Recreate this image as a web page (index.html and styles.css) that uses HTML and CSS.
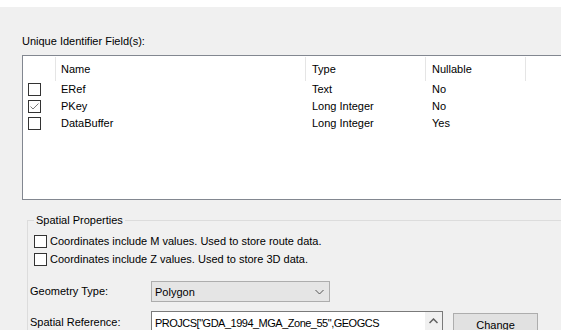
FILE: index.html
```html
<!DOCTYPE html>
<html lang="en">
<head>
    <meta charset="UTF-8">
    <title>Feature Class Properties</title>
    <link rel="stylesheet" href="styles.css">
</head>
<body>

<div class="top-strip"></div>

<div class="page">
    <div class="field-label">Unique Identifier Field(s):</div>

    <!-- Lista de campos -->
    <div class="listview">
        <div class="lv-row lv-header">
            <div class="lv-cell"></div>
            <div class="lv-cell">Name</div>
            <div class="lv-cell">Type</div>
            <div class="lv-cell">Nullable</div>
            <div class="lv-cell"></div>
        </div>
        <div class="lv-row">
            <div class="lv-cell"><span class="check"></span></div>
            <div class="lv-cell">ERef</div>
            <div class="lv-cell">Text</div>
            <div class="lv-cell">No</div>
        </div>
        <div class="lv-row">
            <div class="lv-cell">
                <span class="check">
                    <svg width="11" height="11" viewBox="0 0 11 11"><path d="M1.5 5.5 L4 8 L9.5 2.5" fill="none" stroke="#7a7a7a" stroke-width="1"/></svg>
                </span>
            </div>
            <div class="lv-cell">PKey</div>
            <div class="lv-cell">Long Integer</div>
            <div class="lv-cell">No</div>
        </div>
        <div class="lv-row">
            <div class="lv-cell"><span class="check"></span></div>
            <div class="lv-cell">DataBuffer</div>
            <div class="lv-cell">Long Integer</div>
            <div class="lv-cell">Yes</div>
        </div>
    </div>

    <!-- Propriedades espaciais -->
    <fieldset class="group">
        <legend>Spatial Properties</legend>

        <div class="opt"><span class="check"></span>Coordinates include M values. Used to store route data.</div>
        <div class="opt"><span class="check"></span>Coordinates include Z values. Used to store 3D data.</div>

        <div class="form-row geometry">
            <div class="form-label">Geometry Type:</div>
            <div class="combo">
                <span>Polygon</span>
                <svg width="9" height="6" viewBox="0 0 9 6"><path d="M0.5 1 L4.5 5 L8.5 1" fill="none" stroke="#555" stroke-width="1"/></svg>
            </div>
        </div>

        <div class="form-row spatial">
            <div class="form-label">Spatial Reference:</div>
            <div class="textbox">
                <div class="tb-text">PROJCS["GDA_1994_MGA_Zone_55",GEOGCS<br>"GCS_GDA_1994",DATUM["D_GDA_1994",</div>
                <div class="tb-scroll">
                    <svg width="9" height="6" viewBox="0 0 9 6"><path d="M0.5 5 L4.5 1 L8.5 5" fill="none" stroke="#606060" stroke-width="1.5"/></svg>
                </div>
            </div>
            <button class="btn">Change</button>
        </div>
    </fieldset>
</div>

</body>
</html>
```

FILE: styles.css
```css
html, body {
    margin: 0;
    padding: 0;
    height: 330px;
    overflow: hidden;
}
body {
    font-family: "Liberation Sans", Arial, sans-serif;
    font-size: 11px;
    color: #000;
    background-color: #f0f0f0;
}
.top-strip {
    height: 7px;
    background-color: #ffffff;
}
.page {
    padding-left: 22px;
}
.field-label {
    margin-top: 27px;
    line-height: 15px;
    height: 15px;
}
/* Lista */
.listview {
    margin-top: 6px;
    width: 600px;
    height: 143px;
    background-color: #ffffff;
    border: 1px solid #828790;
}
.lv-row {
    display: grid;
    grid-template-columns: 33px 250px 120px 100px 100px;
    height: 17px;
    line-height: 17px;
}
.lv-row .lv-cell {
    padding-left: 5px;
    white-space: nowrap;
}
.lv-row .lv-cell:first-child {
    padding-left: 5px;
    display: flex;
    align-items: center;
}
.lv-header {
    height: 25px;
    line-height: 24px;
}
.lv-header .lv-cell {
    margin-top: 1px;
    height: 24px;
    border-right: 1px solid #e5e5e5;
}
.lv-row .lv-cell:nth-child(3),
.lv-row .lv-cell:nth-child(4) {
    padding-left: 6px;
}
.check {
    display: inline-flex;
    align-items: center;
    justify-content: center;
    width: 11px;
    height: 11px;
    border: 1px solid #333333;
    background-color: #ffffff;
    flex: none;
}
/* Grupo */
.group {
    margin: 13px 0 0 5px;
    padding: 0 0 0 2px;
    width: 600px;
    border: 1px solid #dcdcdc;
    border-right: none;
    border-bottom: none;
    min-width: 0;
}
.group legend {
    padding: 0 2px;
    margin-left: 4px;
    line-height: 15px;
}
.opt {
    display: flex;
    align-items: center;
    height: 18px;
    margin-left: 4px;
    white-space: nowrap;
}
.opt .check {
    margin-right: 3px;
}
.opt:first-of-type {
    margin-top: 4px;
}
.form-row {
    display: flex;
    align-items: flex-start;
}
.form-label {
    width: 121px;
    flex: none;
}
.geometry {
    margin-top: 13px;
}
.geometry .form-label {
    line-height: 21px;
}
.combo {
    border: 1px solid #adadad;
    background-color: #e5e5e5;
    display: flex;
    align-items: center;
    justify-content: space-between;
    padding: 0 5px 0 3px;
    box-sizing: border-box;
    width: 179px;
    height: 21px;
}
.spatial {
    margin-top: 9px;
}
.spatial .form-label {
    padding-top: 3px;
    line-height: 16px;
}
.textbox {
    width: 292px;
    height: 40px;
    box-sizing: border-box;
    border: 1px solid #7a7a7a;
    background-color: #ffffff;
    display: flex;
}
.tb-text {
    flex: 1;
    padding: 3px 0 0 3px;
    line-height: 17px;
    letter-spacing: -0.5px;
    white-space: nowrap;
    overflow: hidden;
}
.tb-scroll {
    width: 17px;
    background-color: #f0f0f0;
    display: flex;
    justify-content: center;
    padding-top: 6px;
    box-sizing: border-box;
}
.btn {
    margin: 2px 0 0 10px;
    width: 85px;
    height: 17px;
    box-sizing: border-box;
    border: 1px solid #adadad;
    border-bottom: none;
    background-color: #e1e1e1;
    font-family: inherit;
    font-size: 11px;
    line-height: 14px;
    color: #000;
    padding: 4px 0 0 0;
}
```
